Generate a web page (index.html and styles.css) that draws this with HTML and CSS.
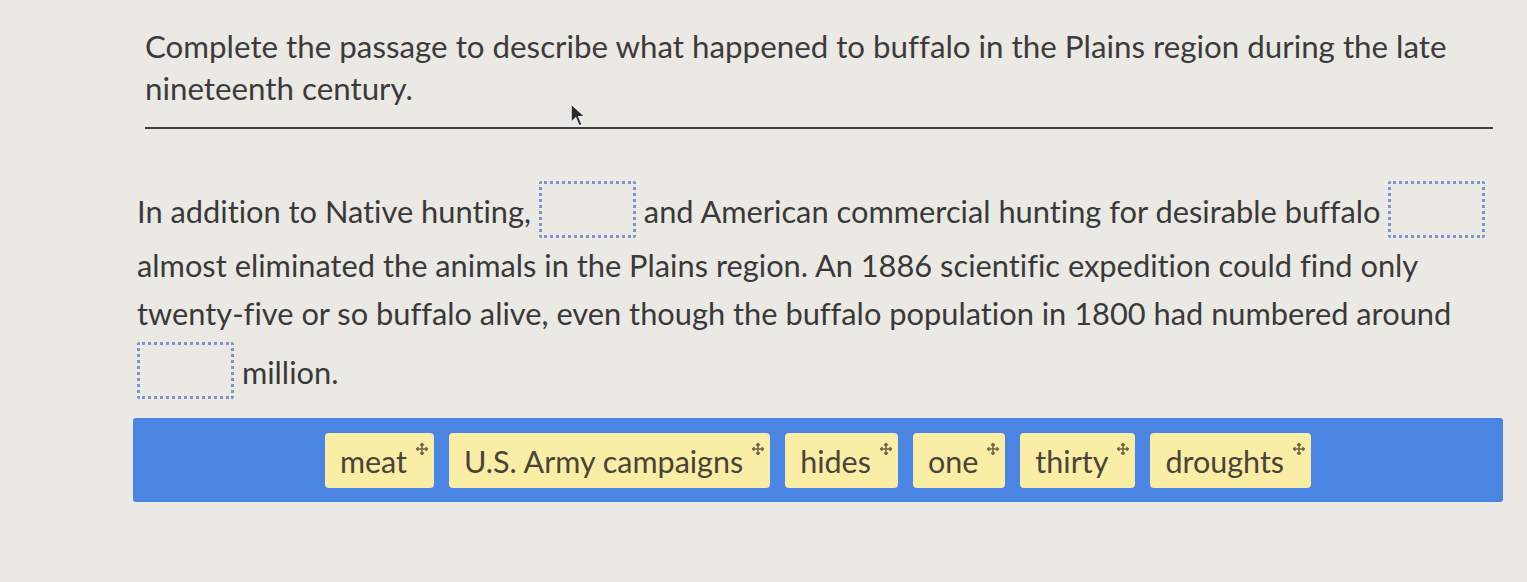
FILE: index.html
```html
<html>
  <head>
    <title>Buffalo passage</title>
    <link rel="stylesheet" href="styles.css">
  </head>
  <body>
    <main class="question">
      <h1 class="prompt">Complete the passage to describe what happened to buffalo in the Plains region during the late nineteenth century.</h1>
      <p class="passage">In addition to Native hunting, <span class="drop"></span> and American commercial hunting for desirable buffalo <span class="drop"></span> almost eliminated the animals in the Plains region. An 1886 scientific expedition could find only <span class="nowrap">twenty-five</span> or so buffalo alive, even though the buffalo population in 1800 had numbered around <span class="drop"></span> million.</p>
      <div class="bank">
        <span class="token">meat<svg class="grip" viewBox="0 0 10 10"><path d="M5 0.5V9.5M0.5 5H9.5M3.5 2L5 0.5L6.5 2M3.5 8L5 9.5L6.5 8M2 3.5L0.5 5L2 6.5M8 3.5L9.5 5L8 6.5"/></svg></span>
        <span class="token">U.S. Army campaigns<svg class="grip" viewBox="0 0 10 10"><path d="M5 0.5V9.5M0.5 5H9.5M3.5 2L5 0.5L6.5 2M3.5 8L5 9.5L6.5 8M2 3.5L0.5 5L2 6.5M8 3.5L9.5 5L8 6.5"/></svg></span>
        <span class="token">hides<svg class="grip" viewBox="0 0 10 10"><path d="M5 0.5V9.5M0.5 5H9.5M3.5 2L5 0.5L6.5 2M3.5 8L5 9.5L6.5 8M2 3.5L0.5 5L2 6.5M8 3.5L9.5 5L8 6.5"/></svg></span>
        <span class="token">one<svg class="grip" viewBox="0 0 10 10"><path d="M5 0.5V9.5M0.5 5H9.5M3.5 2L5 0.5L6.5 2M3.5 8L5 9.5L6.5 8M2 3.5L0.5 5L2 6.5M8 3.5L9.5 5L8 6.5"/></svg></span>
        <span class="token">thirty<svg class="grip" viewBox="0 0 10 10"><path d="M5 0.5V9.5M0.5 5H9.5M3.5 2L5 0.5L6.5 2M3.5 8L5 9.5L6.5 8M2 3.5L0.5 5L2 6.5M8 3.5L9.5 5L8 6.5"/></svg></span>
        <span class="token">droughts<svg class="grip" viewBox="0 0 10 10"><path d="M5 0.5V9.5M0.5 5H9.5M3.5 2L5 0.5L6.5 2M3.5 8L5 9.5L6.5 8M2 3.5L0.5 5L2 6.5M8 3.5L9.5 5L8 6.5"/></svg></span>
      </div>
      <svg class="cursor" viewBox="0 0 14 22"><path d="M1 1V17L5 13L8 20L10.5 19L7.5 12H13Z"/></svg>
    </main>
  </body>
</html>
```

FILE: styles.css
```css
body {
  margin: 0;
  background: #ebe9e4;
  color: #3b3b3d;
  font-family: Lato, "Open Sans", sans-serif;
  font-variant-ligatures: none;
}
.question {
  position: relative;
  width: 1370px;
  margin-left: 133px;
  padding-top: 25px;
}
.prompt {
  margin: 0 10px 0 12px;
  padding-bottom: 18px;
  border-bottom: 2px solid #3e3f45;
  font-size: 31.3px;
  font-weight: 400;
  line-height: 42px;
}
.passage {
  margin: 48px 8px 0 4px;
  font-size: 30.8px;
  line-height: 48px;
  color: #39393b;
}
.nowrap {
  white-space: nowrap;
}
.drop {
  display: inline-block;
  vertical-align: -19px;
  width: 91px;
  height: 51px;
  border: 3px dotted #7f92cf;
  border-radius: 3px;
  margin: 4px 0;
}
.bank {
  display: flex;
  justify-content: center;
  gap: 15px;
  margin-top: 15px;
  padding: 15px 0 14px;
  background: #4b85e4;
  border-radius: 3px;
}
.token {
  display: flex;
  align-items: center;
  height: 55px;
  padding: 0 6px 0 15px;
  background: #faeda6;
  border-radius: 4px;
  font-size: 30.5px;
  color: #4a4338;
}
.grip {
  align-self: flex-start;
  width: 12px;
  height: 12px;
  margin: 10px 0 0 9px;
  fill: none;
  stroke: #6e6148;
  stroke-width: 1.3;
}
.cursor {
  position: absolute;
  left: 437px;
  top: 103px;
  width: 16px;
  height: 25px;
  fill: #2b2b2e;
  stroke: #eee;
  stroke-width: 1;
}
```
